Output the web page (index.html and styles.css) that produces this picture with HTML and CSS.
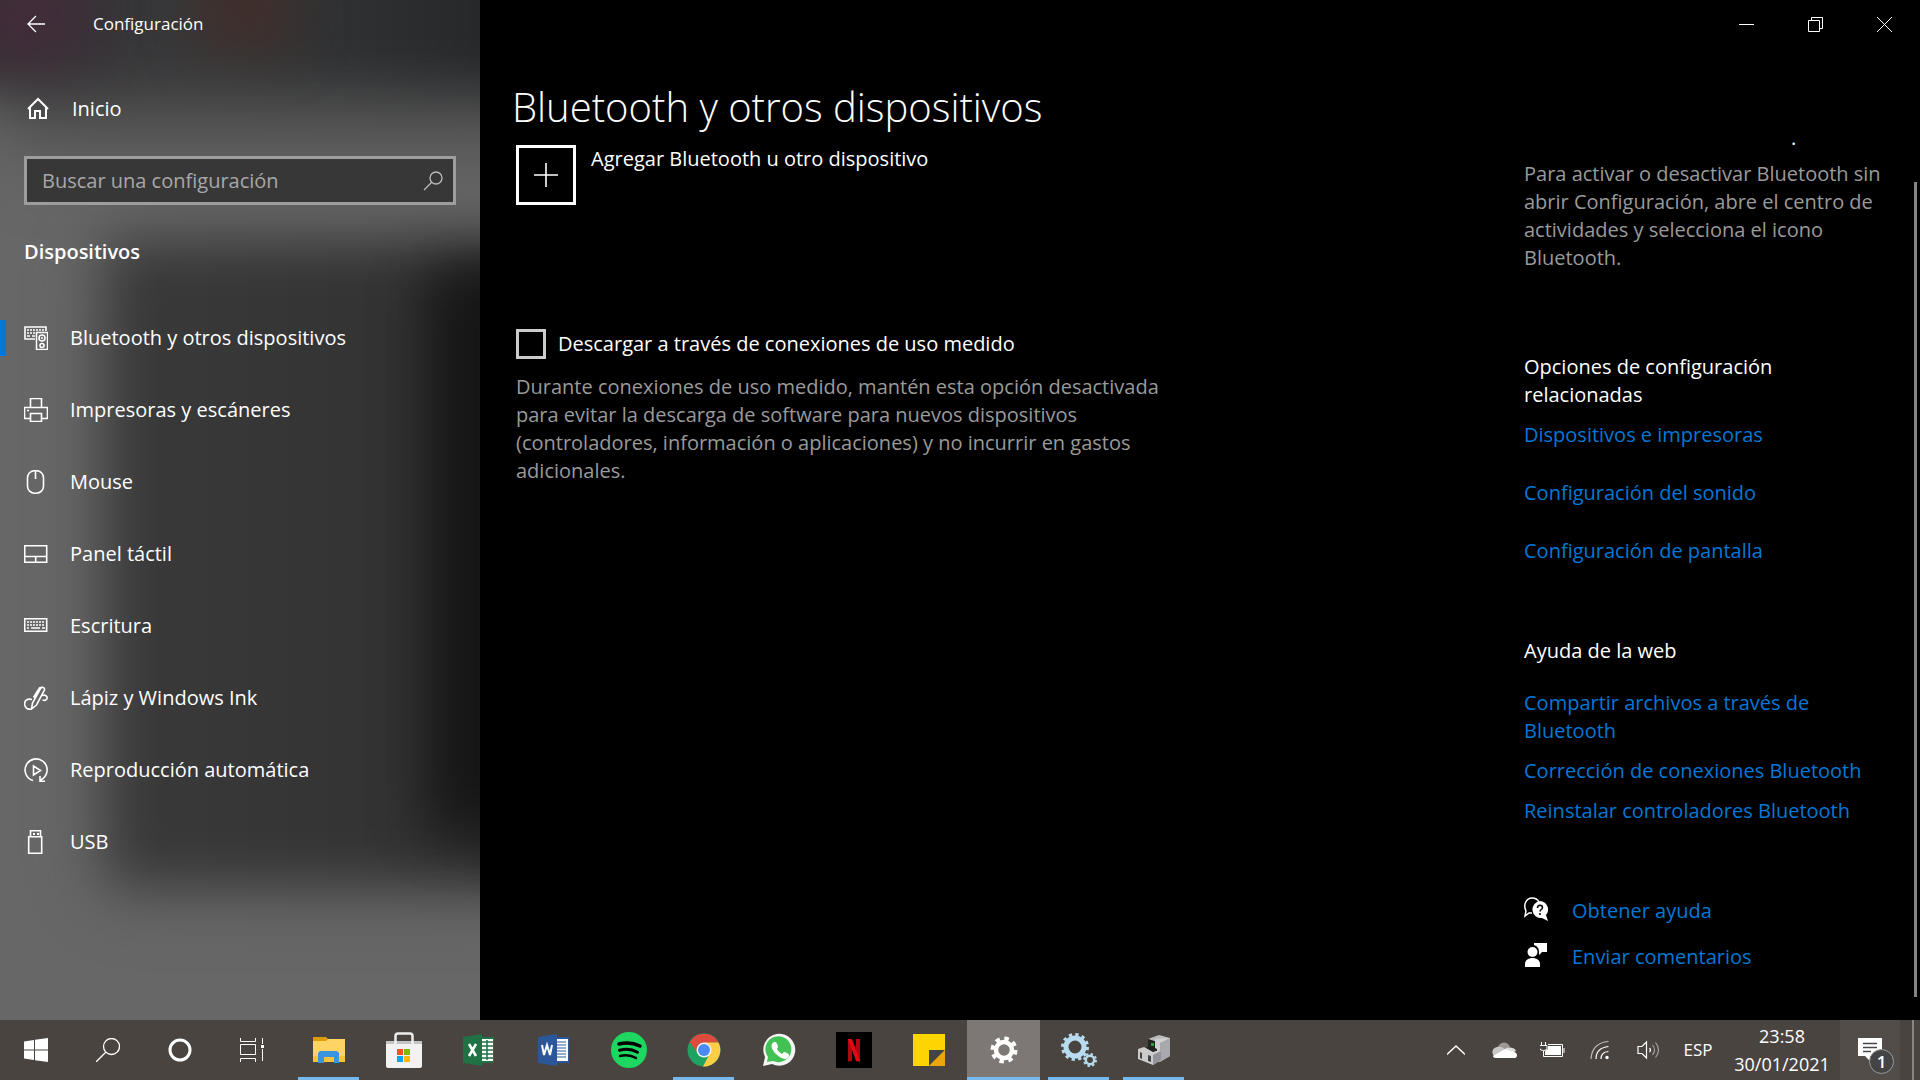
FILE: index.html
```html
<!DOCTYPE html>
<html lang="es">
<head>
<meta charset="utf-8">
<meta name="viewport" content="width=device-width, initial-scale=1">
<title>Configuración</title>
<link rel="stylesheet" href="styles.css">
</head>
<body>
<div class="window">
  <aside class="sidebar">
    <div class="backdrop" aria-hidden="true"><i class="glow glow-top"></i><i class="glow glow-plum"></i><i class="glow glow-rust"></i><i class="glow glow-panel"></i><i class="glow glow-edge"></i></div>
    <header class="titlebar">
      <button class="back" aria-label="Atrás"><svg width="18" height="18" viewBox="0 0 18 18"><path d="M18 9H1M9 1L1 9l8 8"/></svg></button>
      <span class="app-title">Configuración</span>
    </header>
    <a class="home" href="#"><svg width="24" height="24" viewBox="0 0 24 24"><path stroke-width="2" d="M2 12L12 2l10 10M4 10v11h5v-7h5v7h6V10"/></svg>Inicio</a>
    <div class="search">
      <input type="text" placeholder="Buscar una configuración" aria-label="Buscar una configuración">
      <svg width="20" height="20" viewBox="0 0 20 20"><circle cx="13" cy="7" r="6"/><path d="M9 11L1 19"/></svg>
    </div>
    <h2 class="section">Dispositivos</h2>
    <nav class="nav">
      <a class="active" href="#"><svg width="24" height="24" viewBox="0 0 24 24"><path d="M11 13H1V1h21v4"/><path stroke-dasharray="2 1" d="M3 4h17M3 7h8"/><path d="M3 10h3M8 10h3"/><path stroke-width="1.5" d="M12.5 6.5h11v17h-11z"/><circle cx="18" cy="12" r="3"/><path d="M18 11v2"/><circle cx="18" cy="19.5" r="2"/></svg>Bluetooth y otros dispositivos</a>
      <a href="#"><svg width="24" height="24" viewBox="0 0 24 24"><path d="M6.500 9.500v-9h11v9M6 20.500H.5v-11h23v11H18M6.500 15.500h11v8h-11zM3 12.500h2"/></svg>Impresoras y escáneres</a>
      <a href="#"><svg width="24" height="24" viewBox="0 0 24 24"><rect x="3.500" y=".7" width="16" height="22.500" rx="7"/><path d="M11.500 1v8"/></svg>Mouse</a>
      <a href="#"><svg width="24" height="24" viewBox="0 0 24 24"><path d="M.7 3.700h22v16.500H.7zM1 14.500h22M11.700 15v5"/></svg>Panel táctil</a>
      <a href="#"><svg width="24" height="24" viewBox="0 0 24 24"><path d="M.7 4.700h22v12.500H.7z"/><path stroke-dasharray="2 1" d="M3 8h18M3 11h18"/><path d="M3 14h2M7 14h9M18 14h3"/></svg>Escritura</a>
      <a href="#"><svg width="24" height="24" viewBox="0 0 24 24"><path d="M8 13.500C3 12 0 15 .8 19c.7 3 3 4.500 5.700 4M7.500 23l1-6 8-14.500c1.200-2 4.500-1 4 1.500l-8 15zM9.500 11.500l6-9.500 3-1M18.500 9.500c2-1 4.700 0 4.700 2.300s-2.200 3-4.700 2.200"/></svg>Lápiz y Windows Ink</a>
      <a href="#"><svg width="24" height="24" viewBox="0 0 24 24"><path d="M9 22.500A11 11 0 1 1 19 20.500l-3 2M16 18v5.300h5M9.500 8v9l7-4.500z"/></svg>Reproducción automática</a>
      <a href="#"><svg width="24" height="24" viewBox="0 0 24 24"><path d="M6.500 6.500V.7h10v5.800M4.700 6.700h13v16.500h-13z"/><path stroke-width="2" d="M9 4h2M13 4h2"/></svg>USB</a>
    </nav>
  </aside>
  <main class="main">
    <div class="controls">
      <button aria-label="Minimizar"><svg width="15" height="15" viewBox="0 0 15 15"><path d="M0 7.500h15"/></svg></button>
      <button aria-label="Restaurar"><svg width="15" height="15" viewBox="0 0 15 15"><path d="M.5 3.500h11v11H.5zM3.500 3V.5h11v11H12"/></svg></button>
      <button aria-label="Cerrar"><svg width="15" height="15" viewBox="0 0 15 15"><path d="M0 0l15 15M15 0L0 15"/></svg></button>
    </div>
    <h1>Bluetooth y otros dispositivos</h1>
    <div class="columns">
      <section class="content">
        <button class="add"><span class="plus"><svg width="24" height="24" viewBox="0 0 24 24"><path d="M12 0v24M0 12h24"/></svg></span><span>Agregar Bluetooth u otro dispositivo</span></button>
        <label class="check"><input type="checkbox">Descargar a través de conexiones de uso medido</label>
        <p class="muted">Durante conexiones de uso medido, mantén esta opción desactivada para evitar la descarga de software para nuevos dispositivos (controladores, información o aplicaciones) y no incurrir en gastos adicionales.</p>
      </section>
      <aside class="related">
        <p class="cut">.</p>
        <p class="muted tip">Para activar o desactivar Bluetooth sin abrir Configuración, abre el centro de actividades y selecciona el icono Bluetooth.</p>
        <h3>Opciones de configuración relacionadas</h3>
        <ul class="links wide"><li><a href="#">Dispositivos e impresoras</a></li><li><a href="#">Configuración del sonido</a></li><li><a href="#">Configuración de pantalla</a></li></ul>
        <h3>Ayuda de la web</h3>
        <ul class="links web"><li><a href="#">Compartir archivos a través de Bluetooth</a></li><li><a href="#">Corrección de conexiones Bluetooth</a></li><li><a href="#">Reinstalar controladores Bluetooth</a></li></ul>
        <ul class="links support">
          <li><svg width="24" height="24" viewBox="0 0 24 24"><path fill="none" stroke="#fff" stroke-width="1.500" d="M8 16H5l-4 3 1-5C-1 8 2 1 8 1c4 0 6 2 7 4"/><path d="M16 4a8.500 8.500 0 0 1 6 14l2 6-6-3A8.500 8.500 0 1 1 16 4z"/><path fill="none" stroke="#000" stroke-width="1.500" d="M13.500 11c0-4 5-3.500 5-.5 0 2-2.500 2-2.500 4M16 16v2"/></svg><a href="#">Obtener ayuda</a></li>
          <li><svg width="24" height="24" viewBox="0 0 24 24"><path d="M10 0h13v9h-5l-3 3V9c0-4-2-6-5-7z"/><circle cx="8.500" cy="9" r="5"/><path d="M1 24v-3c0-8 15-8 15 0v3z"/></svg><a href="#">Enviar comentarios</a></li>
        </ul>
      </aside>
    </div>
    <div class="scrollbar" aria-hidden="true"></div>
  </main>
</div>
<footer class="taskbar">
  <div class="system">
    <button aria-label="Inicio"><svg width="24" height="24" viewBox="0 0 24 24"><path fill="#fff" d="M0 3.500l10-1.500v9.500H0zM11 1.800L24 0v11.500H11zM0 12.500h10V22L0 20.500zM11 12.500h13V24l-13-1.800z"/></svg></button>
    <button aria-label="Buscar"><svg width="24" height="24" viewBox="0 0 24 24"><g fill="none" stroke="#fff" stroke-width="1.300"><circle cx="15.500" cy="8.500" r="8"/><path d="M10 14L0 24"/></g></svg></button>
    <button aria-label="Cortana"><svg width="24" height="24" viewBox="0 0 24 24"><circle cx="12" cy="12" r="10" fill="none" stroke="#fff" stroke-width="3"/></svg></button>
    <button aria-label="Vista de tareas"><svg width="24" height="24" viewBox="0 0 24 24"><g fill="none" stroke="#fff"><path d="M.5 0v3.500h15V0M.5 24v-3.500h15V24M.5 6.500h15v10H.5zM22.500 0v6M22.500 11v12"/></g><path fill="#fff" d="M21 7h3v3h-3z"/></svg></button>
  </div>
  <div class="apps">
    <button class="open" aria-label="Explorador de archivos"><svg width="32" height="28" viewBox="0 0 32 28"><path fill="#dc9c07" d="M0 1h13l3 3v4H0z"/><path fill="#fed565" d="M0 5h13l2-2h17v23H0z"/><path fill="#f8c13c" d="M0 20h32v6H0z"/><path fill="#3995df" d="M5 27V17l2-2h17l2 2v10h-5v-6H11v6z"/></svg></button>
    <button aria-label="Microsoft Store"><svg width="36" height="36" viewBox="0 0 36 36"><path fill="#f2f2f2" d="M0 9h36v25q0 2-2 2H2q-2 0-2-2z"/><path fill="#c4c4c4" d="M0 9h36v3H0z"/><path fill="none" stroke="#eee" stroke-width="2.500" d="M9.500 12V4q0-2.500 2.500-2.500h12q2.500 0 2.500 2.500v8"/><path fill="#f25022" d="M11 17h6v6h-6z"/><path fill="#7fba00" d="M18 17h6v6h-6z"/><path fill="#00a4ef" d="M11 24h6v6h-6z"/><path fill="#ffb900" d="M18 24h6v6h-6z"/></svg></button>
    <button aria-label="Excel"><svg width="32" height="32" viewBox="0 0 32 32"><path fill="#207245" d="M18 3h13v26H18z"/><path fill="#fff" d="M19 5h11v22H19z"/><path stroke="#207245" stroke-width="1.500" d="M19 8h11M19 12h11M19 16h11M19 20h11M19 24h11M24 6v20"/><path fill="#207245" d="M0 3l19-3v32L0 29z"/><path fill="none" stroke="#fff" stroke-width="2.500" d="M6 10l7 12M13 10L6 22"/></svg></button>
    <button aria-label="Word"><svg width="32" height="32" viewBox="0 0 32 32"><path fill="#2b579a" d="M18 3h13v26H18z"/><path fill="#fff" d="M19 5h11v22H19z"/><path stroke="#2b579a" stroke-width="1.200" d="M19 8h9M19 11h9M19 14h9M19 17h9M19 20h9M19 23h9"/><path fill="#2b579a" d="M0 3l19-3v32L0 29z"/><path fill="none" stroke="#fff" stroke-width="2" d="M4 11l2 10 3-10 3 10 2-10"/></svg></button>
    <button aria-label="Spotify"><svg width="36" height="36" viewBox="0 0 36 36"><circle cx="18" cy="18" r="18" fill="#1ed760"/><g fill="none" stroke="#000" stroke-linecap="round"><path stroke-width="3.600" d="M8 12c8-2 15-1 21 2"/><path stroke-width="3" d="M8.500 18.300c7-2 13-1 18 2"/><path stroke-width="2.500" d="M9 24c6-1.500 11-1 16 2"/></g></svg></button>
    <button class="open" aria-label="Chrome"><svg width="34" height="34" viewBox="0 0 34 34"><circle cx="17" cy="17" r="16.500" fill="#1ea362"/><path fill="#dd4b3e" d="M2.700 9A16.500 16.500 0 0 1 31.500 9.500L17 10a7 7 0 0 0-7 10z"/><path fill="#ffce44" d="M31.500 9.500A16.500 16.500 0 0 1 16 33.500L23 20c2-4 0-9-5-10.500z"/><circle cx="17" cy="17" r="7.500" fill="#f2f2f2"/><circle cx="17" cy="17" r="6" fill="#4a8af4"/></svg></button>
    <button aria-label="WhatsApp"><svg width="34" height="34" viewBox="0 0 34 34"><path fill="#f5f5f5" d="M1 33l2-9A16 16 0 1 1 10 31z"/><path fill="#42c254" d="M5 29l1-5A13 13 0 1 1 11 28z"/><path fill="#fff" d="M12 9c-4 2-3 7 2 12s11 7 13 2c1-2-4-4-5-4l-2 2c-2-1-4-3-5-5l1-2c0-2-2-6-4-5z"/></svg></button>
    <button aria-label="Netflix"><svg width="36" height="36" viewBox="0 0 36 36"><path d="M0 0h36v36H0z"/><path fill="#b1060f" d="M12 7h4v22l-4 .5zM20 7h4v22.500l-4-.5z"/><path fill="#e50914" d="M12 7h4l8 22.500-4-.5z"/></svg></button>
    <button aria-label="Notas rápidas"><svg width="32" height="32" viewBox="0 0 32 32"><path fill="#fed500" d="M0 0h32v16L16 32H0z"/><path fill="#444" d="M16 16h16L16 32z"/><path fill="#eaa60b" d="M32 16v16H16z"/></svg></button>
    <button class="current" aria-label="Configuración"><svg width="28" height="28" viewBox="0 0 28 28"><circle cx="14" cy="14" r="8" fill="none" stroke="#fff" stroke-width="4.500"/><circle cx="14" cy="14" r="11.500" fill="none" stroke="#fff" stroke-width="4" stroke-dasharray="4.500 4.530"/></svg></button>
    <button class="open" aria-label="Servicios"><svg width="36" height="36" viewBox="0 0 36 36"><g fill="none" stroke="#b7dcf0"><circle cx="14" cy="15" r="9" stroke-width="5"/><circle cx="14" cy="15" r="12.500" stroke-width="3" stroke-dasharray="3.270 3.270"/><circle cx="29" cy="28" r="4.200" stroke-width="2.500"/><circle cx="29" cy="28" r="6" stroke-width="2" stroke-dasharray="2.350 2.350"/></g></svg></button>
    <button class="open" aria-label="Dispositivo"><svg width="34" height="32" viewBox="0 0 34 32"><path fill="#bbb" d="M11 5l11-4 11 3-10 5z"/><path fill="#222" d="M11 5l12 4v16l-12-4z"/><path fill="#d0d0d3" d="M18 5l15-1v18l-11 6-4-8z"/><path fill="#a9a9ad" d="M23 9l10-5v18l-10 6z"/><path fill="#2e9a35" d="M14 9h3v3h-3z"/><path fill="#222" d="M8 14l6-2 6 3v3z"/><path fill="#ccc" d="M1 15l6-2 9 5 6-2 2 1v9l-8 5-15-6z"/><path fill="#929298" d="M16 21l8-4v9l-8 5z"/><path fill="#444" d="M3 18l2 1v6l-2-1zM11 21l3 1v6l-3-1z"/></svg></button>
  </div>
  <div class="tray">
    <button aria-label="Mostrar iconos ocultos"><svg width="18" height="10" viewBox="0 0 18 10"><path fill="none" stroke="#fff" stroke-width="1.300" d="M0 9.500L9 1l9 8.500"/></svg></button>
    <button aria-label="OneDrive"><svg width="25" height="16" viewBox="0 0 25 16"><path fill="#9c9896" d="M6 5C8-1 16-1 18 5l-5 5z"/><path fill="#c9c7c6" d="M4 15C-1 14-1 6 5 5c3-1 6 0 9 3z"/><path fill="#dedddc" d="M12 8c3-4 11-3 12 1l-6 3z"/><path fill="#fff" d="M4 16c-2 0-3-1-3-2l12-7 9 3c4 1 4 6 0 6z"/></svg></button>
    <button aria-label="Batería"><svg width="25" height="18" viewBox="0 0 25 18"><path fill="none" stroke="#fff" d="M1.500 1v3M5.500 1v3M0 4.500h7v3q0 2-3.500 2T0 7.500M3.500 10v5.500h19v-12H8M24 7v5"/><path fill="#fff" d="M8 5h13v9H5v-4q3-1 3-3z"/></svg></button>
    <button aria-label="Red"><svg width="20" height="20" viewBox="0 0 20 20"><g fill="none" stroke="#fff" stroke-width="1.200"><path d="M1 19Q2 3 18.500 1.500" opacity=".65"/><path d="M6 19Q6 8 18.500 6.500M11 19q0-7 7.500-7.500"/></g><circle cx="17" cy="17.500" r="1.700" fill="#fff"/></svg></button>
    <button aria-label="Volumen"><svg width="23" height="20" viewBox="0 0 23 20"><g fill="none" stroke="#fff" stroke-width="1.200"><path d="M1 6.500h4L9.500 2v16L5 13.500H1zM12.500 8q2 2 0 4"/><path opacity=".5" d="M15.500 5q4 5 0 10M18.500 2.500q6 7.500 0 15"/></g></svg></button>
    <button class="lang">ESP</button>
    <button class="clock"><span>23:58</span><span>30/01/2021</span></button>
    <button class="notify" aria-label="Notificaciones"><svg width="24" height="24" viewBox="0 0 24 24"><path fill="#fff" d="M0 0h24v18H12v5l-5-5H0z"/><path stroke="#4c4643" stroke-width="1.300" d="M5 5.500h14M5 9.500h14M5 13.500h8"/></svg><span class="badge">1</span></button>
    <button class="desktop" aria-label="Mostrar escritorio"></button>
  </div>
</footer>
</body>
</html>
```
FILE: styles.css
```css
* { box-sizing: border-box; }
body {
  margin: 0;
  min-height: 100vh;
  display: flex;
  flex-direction: column;
  background: #000;
  color: #fff;
  font: 20px/28px "Open Sans", "Noto Sans", sans-serif;
}
button { padding: 0; border: 0; background: none; color: inherit; font: inherit; display: flex; align-items: center; justify-content: center; }
h1, h2, h3, p, ul { margin: 0; padding: 0; font-weight: 400; font-size: inherit; }
ul { list-style: none; }
a { text-decoration: none; color: #0078d7; }
svg { flex: none; display: block; }
.window { flex: 1; display: flex; }

/* navigation pane */
.sidebar { width: 25%; min-width: 400px; position: relative; overflow: hidden; isolation: isolate; background: #676767; }
.sidebar svg, .controls svg, .plus svg { fill: none; stroke: #fff; stroke-width: 1.6; }
.backdrop { position: absolute; inset: 0; z-index: -1; overflow: hidden; }
.glow { position: absolute; filter: blur(26px); }
.glow-top { left: -60px; right: -60px; top: -80px; height: 170px; background: linear-gradient(90deg, #342f33, #38393a 45%, #222426); box-shadow: 60px 50px 50px #4a4a4a; }
.glow-plum { left: -20px; top: -30px; width: 100px; height: 90px; background: #422c3a; }
.glow-rust { left: 200px; top: -40px; width: 90px; height: 90px; background: #402e2b; }
.glow-panel { left: 108px; right: -60px; top: 244px; bottom: 136px; background: linear-gradient(90deg, #3a3a3a, #333 65%, #242424); box-shadow: 0 0 40px #484848; }
.glow-edge { left: 430px; right: -60px; top: 270px; bottom: 190px; background: #161616; }
.titlebar { display: flex; align-items: center; height: 48px; padding-left: 27px; gap: 48px; }
.titlebar svg, .search svg { stroke-width: 1.3; }
.app-title { font-size: 17px; }
.home { display: flex; align-items: center; height: 48px; margin-top: 37px; padding-left: 26px; gap: 22px; color: #fff; }
.search { display: flex; align-items: center; margin: 23px 24px 0; height: 49px; padding: 0 10px 0 15px; border: 3px solid #9d9d9d; background: #373737; }
.search input { flex: 1; min-width: 0; border: 0; padding: 0; background: none; color: #fff; font: inherit; outline: 0; }
.search input::placeholder { color: #a8a8a8; opacity: 1; }
.search svg { stroke: #bbb; }
.section { margin: 32px 24px 0; font-weight: 600; line-height: 30px; }
.nav { margin-top: 35px; }
.nav a { display: flex; align-items: center; height: 72px; padding-left: 24px; gap: 22px; color: #fff; }
.nav a.active { background: linear-gradient(#0078d7, #0078d7) 0 50% / 6px 36px no-repeat; }

/* settings page */
.main { flex: 1; position: relative; min-width: 0; }
.controls { display: flex; justify-content: flex-end; height: 48px; padding-right: 1px; }
.controls button { width: 69px; }
.controls svg { stroke-width: 1; }
h1 { padding-left: 32px; margin-top: 31px; font-size: 40px; line-height: 56px; font-weight: 300; }
.columns { display: flex; justify-content: space-between; padding-left: 36px; }
.content { width: 660px; padding-top: 10px; }
.add { align-items: flex-start; gap: 15px; }
.plus { display: flex; align-items: center; justify-content: center; width: 60px; height: 60px; border: 3px solid #fff; }
.check { display: flex; align-items: center; gap: 12px; margin-top: 124px; height: 30px; }
.check input { appearance: none; width: 30px; height: 30px; margin: 0; border: 3px solid #ccc; }
.muted { color: #9a9a9a; }
.content .muted { margin-top: 14px; }
.related { width: 396px; padding-right: 28px; }
.cut { height: 25px; line-height: 6px; padding-left: 267px; }
.tip { width: 360px; }
.related h3 { margin-top: 81px; width: 300px; }
.links { display: grid; }
.wide { margin-top: 12px; gap: 30px; }
.related .wide + h3 { margin-top: 72px; }
.web { margin-top: 24px; gap: 12px; }
.web li { width: 350px; }
.support { margin-top: 72px; gap: 18px; }
.support li { display: flex; gap: 24px; }
.support svg { fill: #fff; }
.scrollbar { position: absolute; right: 3px; top: 182px; bottom: 23px; width: 3px; background: #858585; }

/* taskbar */
.taskbar { display: flex; height: 60px; background: #4a4440; }
.system { display: flex; margin-right: 4px; }
.system button { width: 72px; }
.apps { display: flex; gap: 2px; }
.apps button { width: 73px; }
.apps .open { background: linear-gradient(#76b9ed, #76b9ed) 50% 100% / 61px 3px no-repeat; }
.apps .current { background: #7d7875; border-bottom: 3px solid #76b9ed; padding-top: 3px; }
.tray { display: flex; margin-left: auto; }
.tray button { width: 48px; font-size: 17px; line-height: 28px; }
.tray .lang { width: 52px; }
.tray .clock { width: 116px; flex-direction: column; font-size: 18px; }
.tray .notify { width: 60px; position: relative; background: #534d4a; }
.badge { position: absolute; right: 6px; bottom: 6px; width: 25px; height: 25px; border: 1px solid #999; border-radius: 50%; background: #444; font-weight: 600; line-height: 23px; }
.tray .desktop { width: 8px; margin-left: 12px; border-left: 2px solid #8a8683; }
```
